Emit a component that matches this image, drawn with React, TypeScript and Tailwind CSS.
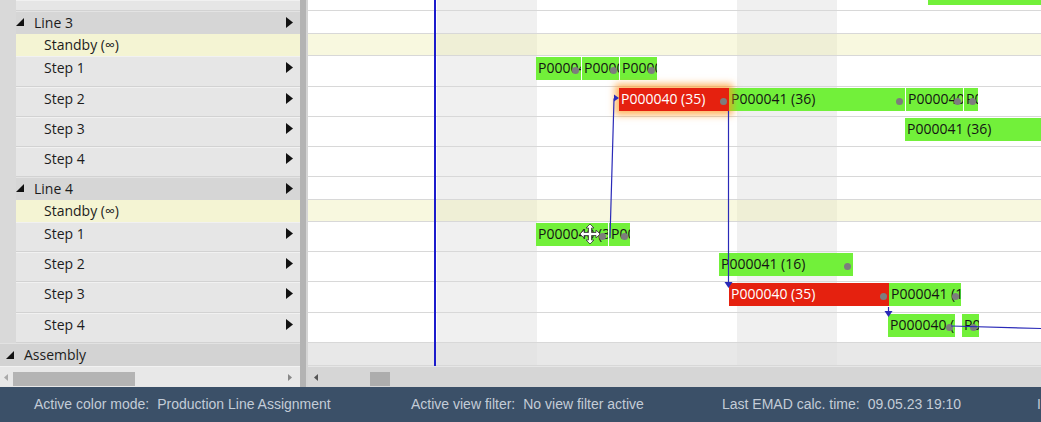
import React from "react";

type Bar = {
  left: number;
  width: number;
  label?: string;
  red?: boolean;
  selected?: boolean;
  dot?: boolean;
  slim?: boolean;
};

type Row = {
  kind: "partial" | "line" | "standby" | "step" | "assembly";
  label?: string;
  h: string;
  bars?: Bar[];
};

const ROWS: Row[] = [
  { kind: "partial", h: "h-[11px]", bars: [{ left: 620, width: 120, slim: true }] },
  { kind: "line", label: "Line 3", h: "h-[23px]" },
  { kind: "standby", label: "Standby (∞)", h: "h-[22px]" },
  {
    kind: "step",
    label: "Step 1",
    h: "h-[31px]",
    bars: [
      { left: 228, width: 45, label: "P000040 (35)", dot: true },
      { left: 274, width: 37, label: "P000041 (36)", dot: true },
      { left: 312, width: 37, label: "P000042 (37)", dot: true },
    ],
  },
  {
    kind: "step",
    label: "Step 2",
    h: "h-[30px]",
    bars: [
      { left: 311, width: 110, label: "P000040 (35)", red: true, selected: true, dot: true },
      { left: 421, width: 176, label: "P000041 (36)", dot: true },
      { left: 598, width: 57, label: "P000040 (35)", dot: true },
      { left: 656, width: 14, label: "P000041 (36)", dot: true },
    ],
  },
  {
    kind: "step",
    label: "Step 3",
    h: "h-[30px]",
    bars: [{ left: 597, width: 140, label: "P000041 (36)" }],
  },
  { kind: "step", label: "Step 4", h: "h-[30px]" },
  { kind: "line", label: "Line 4", h: "h-[23px]" },
  { kind: "standby", label: "Standby (∞)", h: "h-[22px]" },
  {
    kind: "step",
    label: "Step 1",
    h: "h-[30px]",
    bars: [
      { left: 228, width: 72, label: "P000040 (35)", dot: true },
      { left: 301, width: 21, label: "P000041 (36)", dot: true },
    ],
  },
  {
    kind: "step",
    label: "Step 2",
    h: "h-[30px]",
    bars: [{ left: 411, width: 134, label: "P000041 (16)", dot: true }],
  },
  {
    kind: "step",
    label: "Step 3",
    h: "h-[31px]",
    bars: [
      { left: 421, width: 160, label: "P000040 (35)", red: true, dot: true },
      { left: 581, width: 72, label: "P000041 (16)", dot: true },
    ],
  },
  {
    kind: "step",
    label: "Step 4",
    h: "h-[30px]",
    bars: [
      { left: 580, width: 67, label: "P000040 (35)", dot: true },
      { left: 654, width: 17, label: "P000041 (36)", dot: true },
    ],
  },
  { kind: "assembly", label: "Assembly", h: "h-[23px]" },
];

function Expanded() {
  return (
    <svg width="8" height="8" viewBox="0 0 8 8" className="shrink-0">
      <polygon points="8,0 8,8 0,8" fill="#111" />
    </svg>
  );
}

function RightArrow() {
  return (
    <svg width="7" height="11" viewBox="0 0 7 11" className="shrink-0">
      <polygon points="0,0 7,5.5 0,11" fill="#111" />
    </svg>
  );
}

function TreeRow({ row }: { row: Row }) {
  if (row.kind === "assembly") {
    return (
      <div className={`${row.h} flex items-center bg-[#d3d3d3] border-t border-[#e2e2e2] pl-[6px] pb-[1px]`}>
        <Expanded />
        <span className="ml-[10px]">{row.label}</span>
      </div>
    );
  }
  let body: React.ReactNode = null;
  let bg = "bg-[#e6e6e6] border-t border-[#f1f1f1] border-b border-b-[#d2d2d2]";
  if (row.kind === "line") {
    bg = "bg-[#d6d6d6] border-t border-[#e3e3e3]";
    body = (
      <div className="flex h-full items-center pr-[7px] pb-[2px]">
        <Expanded />
        <span className="ml-[10px] flex-1">{row.label}</span>
        <RightArrow />
      </div>
    );
  } else if (row.kind === "standby") {
    bg = "bg-[#f4f4d3]";
    body = (
      <div className="flex h-full items-center pl-[28px] pb-[1px]">
        <span>{row.label}</span>
      </div>
    );
  } else if (row.kind === "step") {
    body = (
      <div className="flex h-[20px] items-center pl-[28px] pr-[7px]">
        <span className="flex-1">{row.label}</span>
        <RightArrow />
      </div>
    );
  }
  return (
    <div className={`${row.h} flex`}>
      <div className="w-[16px] shrink-0 bg-[#d9d9d9]" />
      <div className={`flex-1 ${bg}`}>{body}</div>
    </div>
  );
}

function GanttBar({ bar }: { bar: Bar }) {
  const color = bar.red ? "bg-[#e5210f] text-white" : "bg-[#72f03a] text-[#141414]";
  const size = bar.slim ? "top-0 h-[5px]" : "top-[1px] h-[23px]";
  const glow = bar.selected ? "shadow-[0_0_7px_4px_rgba(255,150,30,0.7)] z-10" : "";
  return (
    <div
      className={`absolute ${size} ${color} ${glow} overflow-hidden`}
      style={{ left: bar.left, width: bar.width }}
    >
      {bar.label && (
        <span className="absolute left-[2px] top-0 h-full pb-[3px] flex items-center whitespace-nowrap text-[14px]">
          {bar.label}
        </span>
      )}
      {bar.dot && (
        <span className="absolute right-[2px] top-[10px] w-[7px] h-[7px] rounded-full bg-[#7d7d7d]" />
      )}
    </div>
  );
}

function ChartRow({ row }: { row: Row }) {
  let bg = "";
  if (row.kind === "standby") bg = "bg-[rgba(236,236,170,0.38)]";
  if (row.kind === "assembly") bg = "bg-[rgba(222,222,222,0.7)]";
  return (
    <div className={`${row.h} relative border-b border-[#d8d8d8] ${bg}`}>
      {row.bars?.map((b, i) => <GanttBar key={i} bar={b} />)}
    </div>
  );
}

function MoveCursor() {
  return (
    <svg width="22" height="22" viewBox="0 0 22 22" className="absolute left-[271px] top-[223px] z-30">
      <path
        d="M11 1 L15 5 H12.5 V9.5 H17 V7 L21 11 L17 15 V12.5 H12.5 V17 H15 L11 21 L7 17 H9.5 V12.5 H5 V15 L1 11 L5 7 V9.5 H9.5 V5 H7 Z"
        fill="#fff"
        stroke="#444"
        strokeWidth="0.9"
        strokeLinejoin="round"
      />
    </svg>
  );
}

function Connectors() {
  const c = "#2a2ab8";
  return (
    <svg className="absolute inset-0 z-20 pointer-events-none" width="733" height="366">
      <polyline points="302,238 306,99 309,98" fill="none" stroke={c} strokeWidth="1.2" />
      <polygon points="306,94.5 311,98 306,101.5" fill={c} />
      <line x1="420.5" y1="111" x2="420.5" y2="283" stroke={c} strokeWidth="1.2" />
      <polygon points="416.5,282 420.5,288 424.5,282" fill={c} />
      <line x1="580.5" y1="307" x2="580.5" y2="312" stroke={c} strokeWidth="1.2" />
      <polygon points="576.5,311 580.5,317 584.5,311" fill={c} />
      <line x1="643" y1="326" x2="733" y2="328.5" stroke={c} strokeWidth="1.2" />
    </svg>
  );
}

export default function App() {
  return (
    <div className="w-[1041px] h-[422px] flex flex-col overflow-hidden font-['Open_Sans',sans-serif] text-[14px] text-[#1c1c1c]">
      <div className="flex h-[387px]">
        <div className="w-[300px] flex flex-col">
          <div className="h-[366px] flex flex-col overflow-hidden">
            {ROWS.map((r, i) => (
              <TreeRow key={i} row={r} />
            ))}
          </div>
          <div className="h-[21px] flex items-center bg-[#e8e8e8] border-t border-[#f2f2f2] px-[4px]">
            <svg width="4" height="7" viewBox="0 0 4 7">
              <polygon points="4,0 0,3.5 4,7" fill="#aaa" />
            </svg>
            <div className="ml-[5px] w-[122px] h-[14px] mt-[4px] bg-[#b4b4b4]" />
            <div className="flex-1" />
            <svg width="4" height="7" viewBox="0 0 4 7" className="mr-[4px]">
              <polygon points="0,0 4,3.5 0,7" fill="#888" />
            </svg>
          </div>
        </div>
        <div className="w-[8px] flex">
          <div className="w-[6px] bg-[#b3b3b3]" />
          <div className="w-[2px] bg-[#d4d4d4]" />
        </div>
        <div className="flex-1 flex flex-col">
          <div className="h-[366px] relative overflow-hidden bg-white">
            <div className="absolute top-0 bottom-0 left-[129px] w-[100px] bg-[#f0f0f0]" />
            <div className="absolute top-0 bottom-0 left-[429px] w-[100px] bg-[#f0f0f0]" />
            <div className="relative flex flex-col">
              {ROWS.map((r, i) => (
                <ChartRow key={i} row={r} />
              ))}
            </div>
            <div className="absolute top-0 bottom-0 left-[126px] w-[2px] bg-[#1c1ccc] z-20" />
            <Connectors />
            <MoveCursor />
          </div>
          <div className="h-[21px] flex items-center bg-[#d6d6d6] border-t border-[#e6e6e6] pl-[6px]">
            <svg width="4" height="7" viewBox="0 0 4 7">
              <polygon points="4,0 0,3.5 4,7" fill="#555" />
            </svg>
            <div className="ml-[52px] w-[20px] h-[14px] mt-[4px] bg-[#adadad]" />
          </div>
        </div>
      </div>
      <div className="h-[35px] flex items-center bg-[#3b5068] text-[#c3ccd7] font-['Liberation_Sans',Arial,sans-serif] text-[14px] pl-[34px] whitespace-nowrap">
        <div className="w-[377px]">
          <span>Active color mode:</span>
          <span className="ml-[8px]">Production Line Assignment</span>
        </div>
        <div className="w-[311px]">
          <span>Active view filter:</span>
          <span className="ml-[8px]">No view filter active</span>
        </div>
        <div className="w-[315px]">
          <span>Last EMAD calc. time:</span>
          <span className="ml-[8px]">09.05.23 19:10</span>
        </div>
        <div>I</div>
      </div>
    </div>
  );
}
